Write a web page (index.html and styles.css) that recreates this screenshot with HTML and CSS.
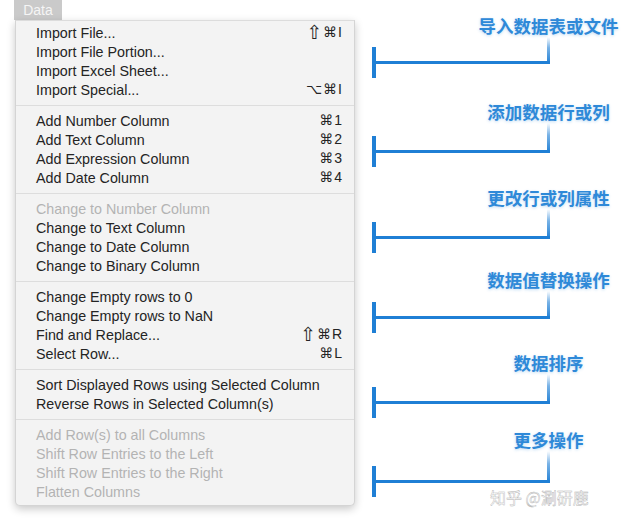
FILE: index.html
```html
<!DOCTYPE html>
<html lang="zh">
<head>
<meta charset="utf-8">
<title>Data menu</title>
<link rel="stylesheet" href="styles.css">
</head>
<body>
<div class="page">
  <div class="menu-wrap">
    <div class="tab">Data</div>
    <div class="menu">
      <div class="group">
        <div class="item"><span>Import File...</span><span class="key"><span class="shift">⇧</span>⌘I</span></div>
        <div class="item"><span>Import File Portion...</span></div>
        <div class="item"><span>Import Excel Sheet...</span></div>
        <div class="item"><span>Import Special...</span><span class="key">⌥⌘I</span></div>
      </div>
      <div class="sep"></div>
      <div class="group">
        <div class="item"><span>Add Number Column</span><span class="key">⌘1</span></div>
        <div class="item"><span>Add Text Column</span><span class="key">⌘2</span></div>
        <div class="item"><span>Add Expression Column</span><span class="key">⌘3</span></div>
        <div class="item"><span>Add Date Column</span><span class="key">⌘4</span></div>
      </div>
      <div class="sep"></div>
      <div class="group">
        <div class="item disabled"><span>Change to Number Column</span></div>
        <div class="item"><span>Change to Text Column</span></div>
        <div class="item"><span>Change to Date Column</span></div>
        <div class="item"><span>Change to Binary Column</span></div>
      </div>
      <div class="sep"></div>
      <div class="group">
        <div class="item"><span>Change Empty rows to 0</span></div>
        <div class="item"><span>Change Empty rows to NaN</span></div>
        <div class="item"><span>Find and Replace...</span><span class="key"><span class="shift">⇧</span>⌘R</span></div>
        <div class="item"><span>Select Row...</span><span class="key">⌘L</span></div>
      </div>
      <div class="sep"></div>
      <div class="group">
        <div class="item"><span>Sort Displayed Rows using Selected Column</span></div>
        <div class="item"><span>Reverse Rows in Selected Column(s)</span></div>
      </div>
      <div class="sep"></div>
      <div class="group">
        <div class="item disabled"><span>Add Row(s) to all Columns</span></div>
        <div class="item disabled"><span>Shift Row Entries to the Left</span></div>
        <div class="item disabled"><span>Shift Row Entries to the Right</span></div>
        <div class="item disabled"><span>Flatten Columns</span></div>
      </div>
    </div>
  </div>

  <div class="notes">
    <div class="note n1">
      <div class="label"><span>导入数据表或文件</span></div>
      <div class="stem"></div><div class="bar"></div><div class="hline"></div>
    </div>
    <div class="note n2">
      <div class="label"><span>添加数据行或列</span></div>
      <div class="stem"></div><div class="bar"></div><div class="hline"></div>
    </div>
    <div class="note n3">
      <div class="label"><span>更改行或列属性</span></div>
      <div class="stem"></div><div class="bar"></div><div class="hline"></div>
    </div>
    <div class="note n4">
      <div class="label"><span>数据值替换操作</span></div>
      <div class="stem"></div><div class="bar"></div><div class="hline"></div>
    </div>
    <div class="note n5">
      <div class="label"><span>数据排序</span></div>
      <div class="stem"></div><div class="bar"></div><div class="hline"></div>
    </div>
    <div class="note n6">
      <div class="label"><span>更多操作</span></div>
      <div class="stem"></div><div class="bar"></div><div class="hline"></div>
    </div>
  </div>
</div>
<div class="watermark">知乎 @涮研鹿</div>
</body>
</html>
```

FILE: styles.css
```css
html, body {
  margin: 0;
  padding: 0;
  background: #ffffff;
  overflow: hidden;
}

body {
  width: 623px;
  height: 524px;
  position: relative;
  font-family: "Liberation Sans", Arial, sans-serif;
}

.page {
  display: flex;
  align-items: flex-start;
}

.menu-wrap {
  margin-left: 14px;
  width: 341px;
}

.tab {
  width: 48px;
  height: 20px;
  background: #cacaca;
  color: #f5f5f5;
  font-size: 14px;
  line-height: 20px;
  text-align: center;
}

.menu {
  margin-left: 1px;
  width: 340px;
  box-sizing: border-box;
  background: #f3f3f3;
  border: 1px solid #d4d4d4;
  border-top-color: #dcdcdc;
  border-radius: 0 0 5px 5px;
  box-shadow: 0 3px 9px rgba(0, 0, 0, 0.22);
  padding: 2px 0 4px;
}

.item {
  display: flex;
  justify-content: space-between;
  align-items: center;
  height: 19px;
  padding: 0 11px 0 20px;
  font-size: 14.3px;
  color: #242424;
  white-space: nowrap;
}

.item.disabled {
  color: #b3b3b3;
}

.key {
  display: flex;
  align-items: center;
  font-family: "Liberation Sans", "DejaVu Sans", sans-serif;
  font-size: 14px;
  letter-spacing: 1px;
  line-height: 19px;
}

.shift {
  font-family: "DejaVu Sans", sans-serif;
  font-size: 19px;
  line-height: 19px;
  letter-spacing: 0;
  margin-right: 1px;
}

.sep {
  height: 1px;
  background: #dddddd;
  margin: 6px 0 5px;
}

.notes {
  margin-left: 17px;
  display: flex;
  flex-direction: column;
}

.note {
  --stem: 11px;
  display: grid;
  grid-template-columns: 4px 171px 3px;
  grid-template-rows: 22px var(--stem) 14px 3px 14px;
}

.n1 { --stem: 10px; margin-top: 15px; }
.n2 { --stem: 13px; margin-top: 23px; }
.n3 { --stem: 13px; margin-top: 20px; }
.n4 { --stem: 11px; margin-top: 16px; }
.n5 { --stem: 13px; margin-top: 19px; }
.n6 { --stem: 15px; margin-top: 11px; }

.label {
  grid-column: 3;
  grid-row: 1;
  display: flex;
  justify-content: center;
  white-space: nowrap;
  font-family: "Noto Sans CJK SC", sans-serif;
  font-weight: 700;
  font-size: 17.5px;
  line-height: 22px;
  color: #2e89d8;
  text-shadow: 0 1px 3px rgba(43, 135, 215, 0.3);
}

.stem {
  grid-column: 3;
  grid-row: 2 / 5;
  background: linear-gradient(to bottom, rgba(31, 127, 213, 0) 0%, rgba(31, 127, 213, 0.6) 40%, #1f7fd5 100%);
}

.bar {
  grid-column: 1;
  grid-row: 3 / 6;
  background: #1f7fd5;
}

.hline {
  grid-column: 1 / 4;
  grid-row: 4;
  background: #1f7fd5;
  border-radius: 0 0 2px 0;
}

.watermark {
  position: absolute;
  left: 490px;
  top: 486px;
  font-family: "Noto Sans CJK SC", sans-serif;
  font-size: 16px;
  line-height: 22px;
  color: #ffffff;
  -webkit-text-stroke: 0.4px #b0b0b0;
}
```
